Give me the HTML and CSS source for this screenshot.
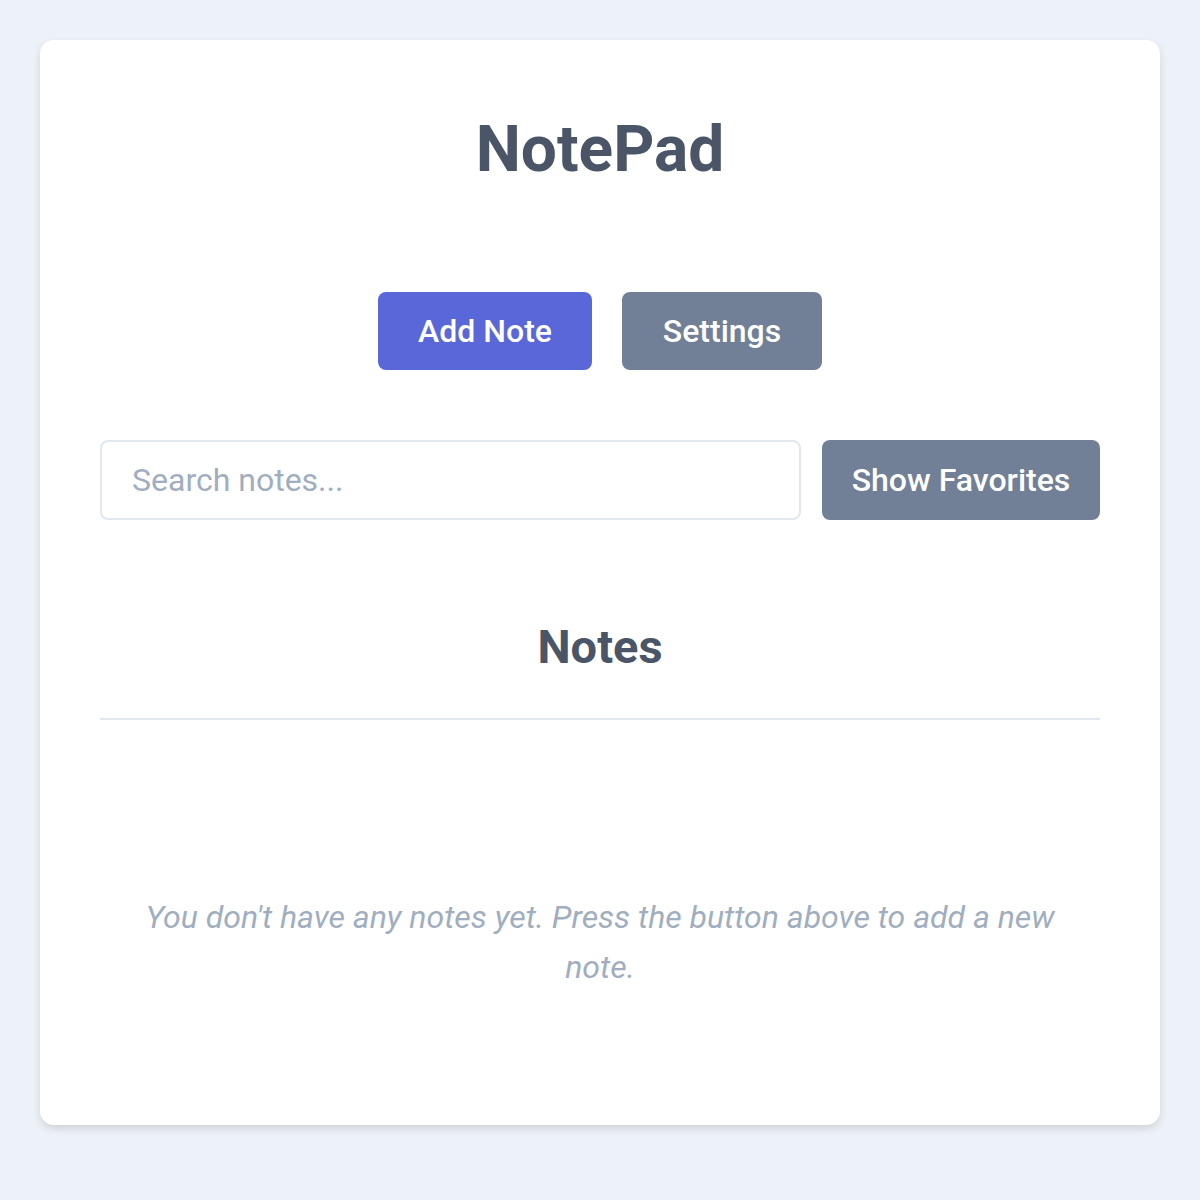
FILE: index.html
```html
<!DOCTYPE html>
<html lang="en">
<head>
<meta charset="utf-8">
<title>NotePad</title>
<link rel="stylesheet" href="styles.css">
</head>
<body>
<main class="card">
  <h1 class="title">NotePad</h1>
  <div class="actions">
    <button class="btn btn-primary btn-add">Add Note</button>
    <button class="btn btn-secondary btn-settings">Settings</button>
  </div>
  <div class="search-row">
    <input class="search" type="text" placeholder="Search notes...">
    <button class="btn btn-secondary btn-fav">Show Favorites</button>
  </div>
  <h2 class="notes-heading">Notes</h2>
  <div class="empty">
    <p class="empty-text">You don't have any notes yet. Press the button above to add a new note.</p>
  </div>
</main>
</body>
</html>
```
FILE: styles.css
```css
* { box-sizing: border-box; }
html, body { margin: 0; padding: 0; }
body {
  background: #edf1f8;
  font-family: Roboto, "Liberation Sans", Arial, sans-serif;
  padding: 40px;
  min-height: 1200px;
}
.card {
  background: #ffffff;
  border-radius: 14px;
  box-shadow: 0 4px 8px rgba(0, 0, 0, 0.12);
  padding: 60px;
  height: 1085px;
  display: flex;
  flex-direction: column;
}
.title {
  margin: 12px 0 0;
  text-align: center;
  font-size: 64px;
  line-height: 76px;
  font-weight: 700;
  color: #4a5568;
}
.actions {
  margin-top: 104px;
  display: flex;
  justify-content: center;
  gap: 30px;
}
.btn {
  border: none;
  border-radius: 8px;
  color: #ffffff;
  font-family: inherit;
  font-size: 32px;
  font-weight: 500;
  line-height: 38px;
  cursor: pointer;
}
.btn-primary { background: #5a67d8; }
.btn-secondary { background: #718096; }
.btn-add { width: 214px; height: 78px; }
.btn-settings { width: 200px; height: 78px; }
.search-row {
  margin-top: 70px;
  display: flex;
  gap: 21px;
}
.search {
  flex: 1;
  height: 80px;
  border: 2px solid #e2e8f0;
  border-radius: 8px;
  padding: 0 30px;
  font-family: inherit;
  font-size: 32px;
  color: #4a5568;
  outline: none;
}
.search::placeholder { color: #a0aec0; }
.btn-fav { width: 278px; height: 80px; }
.notes-heading {
  margin: 100px 0 0;
  padding-bottom: 44px;
  border-bottom: 2px solid #e2e8f0;
  text-align: center;
  font-size: 47px;
  line-height: 54px;
  font-weight: 700;
  color: #4a5568;
}
.empty {
  padding: 0 40px;
}
.empty-text {
  margin: 172px 0 0;
  text-align: center;
  font-size: 32px;
  line-height: 50px;
  font-style: italic;
  color: #a0aec0;
}
```
